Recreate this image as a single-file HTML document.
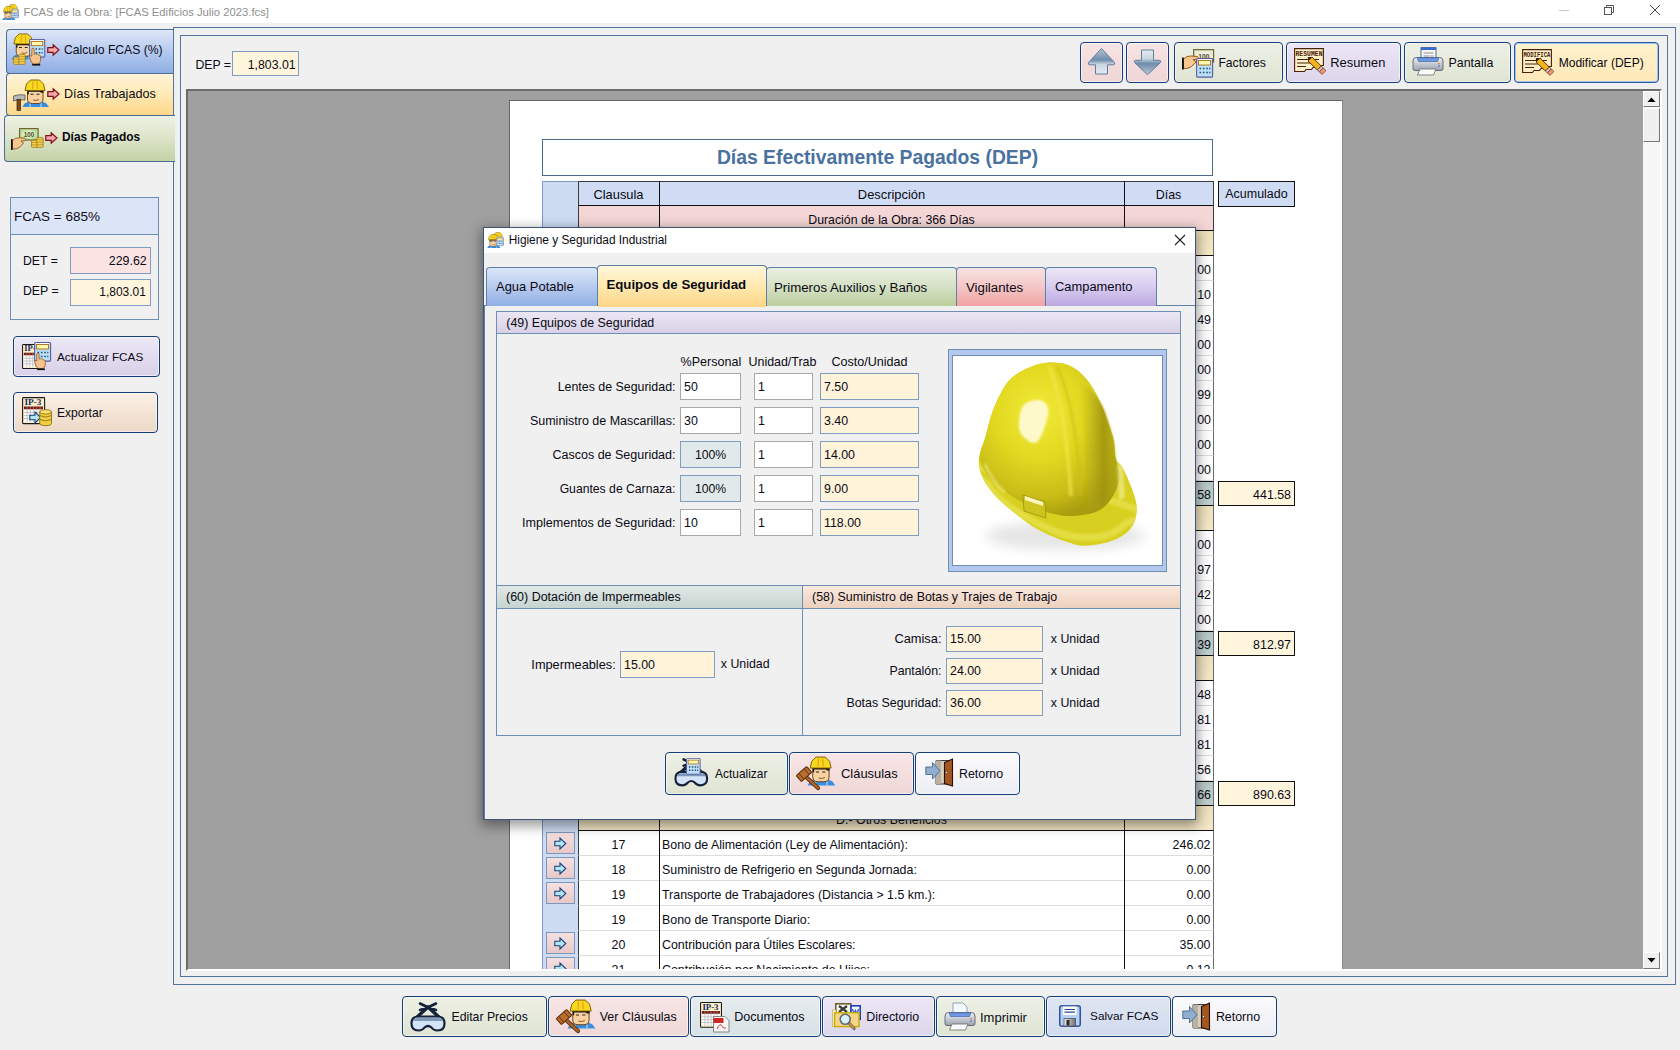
<!DOCTYPE html><html><head><meta charset="utf-8"><style>
*{box-sizing:border-box;margin:0;padding:0}
html,body{width:1680px;height:1050px;overflow:hidden;background:#f0f0f0;font-family:"Liberation Sans",sans-serif;font-size:12.5px;color:#0a0a14;position:relative}
.a{position:absolute}
.t{position:absolute;white-space:nowrap;line-height:1}
.btn{position:absolute;border:1px solid #143e7a;border-radius:4px;box-shadow:inset 0 0 0 1px rgba(255,255,255,.55)}
.fld{position:absolute;border:1px solid #7f9dc0;white-space:nowrap;line-height:1}
.wf{position:absolute;border:1px solid #a8a8a8;background:#fff;white-space:nowrap;line-height:1}
</style></head><body><div class="a" style="left:0px;top:0px;width:1680px;height:23px;background:#fff"></div><svg class="a" style="left:7px;top:4px;width:13px;height:14px;overflow:visible" viewBox="0 0 13 14"><g transform="scale(0.45)">
<path d="M0.5 28 L2.5 24.5 Q5 22.5 9 22 H18 Q22 22.5 24.5 24.5 L27 28Z" fill="#3a8ee0"/>
<path d="M8 22.5v5.5M19 22.5v5.5" stroke="#a8d0f8" stroke-width="1.2"/>
<path d="M5.5 11 H21 V20 Q21 24.5 16 24.5 H10.5 Q5.5 24.5 5.5 20Z" fill="#f8d2a0" stroke="#6a3a10" stroke-width="0.9"/>
<path d="M5.5 10.5 H21.5 V13.8 H19 L18 12.8 H6.8 V15.5 H5.5Z" fill="#151515"/>
<path d="M8.5 15.2h3M14.5 15.2h3" stroke="#222" stroke-width="1.1"/>
<path d="M11 21 Q14 22.2 17 20.5" stroke="#8a4a20" stroke-width="0.9" fill="none"/>
<path d="M3 11.5 L4.5 5 L8.5 1 H17.5 L21.5 5 L23 11.5Z" fill="#f6d820" stroke="#7a5800" stroke-width="0.9" stroke-linejoin="round"/>
<path d="M11 2.5 L10.5 10M15 2.5 L15.5 10" stroke="#e89a10" stroke-width="1"/>
</g></svg><svg class="a" style="left:2px;top:6px;width:15px;height:15px;overflow:visible" viewBox="0 0 15 15"><g transform="scale(0.5)">
<path d="M0.5 28 L2.5 24.5 Q5 22.5 9 22 H18 Q22 22.5 24.5 24.5 L27 28Z" fill="#3a8ee0"/>
<path d="M8 22.5v5.5M19 22.5v5.5" stroke="#a8d0f8" stroke-width="1.2"/>
<path d="M5.5 11 H21 V20 Q21 24.5 16 24.5 H10.5 Q5.5 24.5 5.5 20Z" fill="#f8d2a0" stroke="#6a3a10" stroke-width="0.9"/>
<path d="M5.5 10.5 H21.5 V13.8 H19 L18 12.8 H6.8 V15.5 H5.5Z" fill="#151515"/>
<path d="M8.5 15.2h3M14.5 15.2h3" stroke="#222" stroke-width="1.1"/>
<path d="M11 21 Q14 22.2 17 20.5" stroke="#8a4a20" stroke-width="0.9" fill="none"/>
<path d="M3 11.5 L4.5 5 L8.5 1 H17.5 L21.5 5 L23 11.5Z" fill="#f6d820" stroke="#7a5800" stroke-width="0.9" stroke-linejoin="round"/>
<path d="M11 2.5 L10.5 10M15 2.5 L15.5 10" stroke="#e89a10" stroke-width="1"/>
</g></svg><svg class="a" style="left:11px;top:9px;width:8px;height:10px;overflow:visible" viewBox="0 0 8 10"><g transform="scale(0.45)">
<rect x="0.6" y="0.6" width="16" height="18.5" rx="1" fill="#b8e0f8" stroke="#5a5aa0" stroke-width="1.1"/>
<path d="M1.5 1.5h14" stroke="#fff" stroke-width="1"/>
<rect x="2.5" y="2.5" width="12" height="4.5" fill="#fff8b0" stroke="#b06a10" stroke-width="0.9"/>
<path d="M3.5 10.5h1.6M6.9 10.5h1.6M10.3 10.5h1.6M13.2 10.5h1.2M3.5 14.5h1.6M6.9 14.5h1.6M10.3 14.5h1.6M13.2 14.5h1.2" stroke="#34466a" stroke-width="1.7"/>
</g></svg><div class="t" style="left:23.50px;top:6.51px;font-size:11.28px;color:#8f8f8f;">FCAS de la Obra: [FCAS Edificios Julio 2023.fcs]</div><div class="a" style="left:1559px;top:10px;width:10px;height:1px;background:#c8c8c8"></div><svg class="a" style="left:1600px;top:0;width:70px;height:20px" viewBox="0 0 70 20"><rect x="4.5" y="7.5" width="7" height="7" fill="none" stroke="#555" stroke-width="1"/><path d="M6.5 7.5V5.5H13.5V12.5H11.5" fill="none" stroke="#555" stroke-width="1"/><path d="M50 5L60 15M60 5L50 15" stroke="#444" stroke-width="1"/></svg><div class="a" style="left:173px;top:27px;width:1503px;height:958px;border:1px solid #52739c;"></div><div class="a" style="left:180px;top:35px;width:1488px;height:942px;border:1px solid #52739c;"></div><div class="a" style="left:186px;top:89px;width:1476px;height:882px;background:#a0a0a0;border-top:2px solid #6c6c6c;border-left:2px solid #6c6c6c;border-right:2px solid #fff;border-bottom:2px solid #fff"></div><div class="a" style="left:1643px;top:91px;width:17px;height:878px;background:#f7f7f7;"></div><div class="a" style="left:1643px;top:91px;width:17px;height:16px;background:#f0f0f0;border:1px solid #fff;border-right-color:#777;border-bottom-color:#777"></div><svg class="a" style="left:1643px;top:91px;width:17px;height:16px"><path d="M4.5 11L8.5 6.5L12.5 11Z" fill="#000"/></svg><div class="a" style="left:1643px;top:108px;width:17px;height:34px;background:#f0f0f0;border:1px solid #fff;border-right-color:#777;border-bottom-color:#777"></div><div class="a" style="left:1643px;top:952px;width:17px;height:17px;background:#f0f0f0;border:1px solid #fff;border-right-color:#777;border-bottom-color:#777"></div><svg class="a" style="left:1643px;top:952px;width:17px;height:17px"><path d="M4.5 6L8.5 10.5L12.5 6Z" fill="#000"/></svg><div class="t" style="left:195.40px;top:58.85px;font-size:12.29px;">DEP =</div><div class="a" style="left:232px;top:51px;width:67px;height:25px;background:#fff5dc;border:1px solid #7f9dc0"></div><div class="t" style="left:232.00px;top:59.05px;font-size:12.30px;width:63.6px;text-align:right;">1,803.01</div><div class="a" style="left:6px;top:29px;width:167px;height:45px;background:linear-gradient(to bottom,#dfe8f8,#b5c9ee 50%,#8eaee5);border:1px solid #4a6d96;border-right:none;border-radius:4px 0 0 4px;"></div><div class="a" style="left:6px;top:73px;width:167px;height:43px;background:linear-gradient(to bottom,#fff4d8,#ffe9b4 50%,#fdd78a);border:1px solid #4a6d96;border-right:none;border-radius:4px 0 0 4px;"></div><div class="a" style="left:4px;top:115px;width:171px;height:47px;background:linear-gradient(to bottom,#eef1e4,#dce4c8 50%,#c3d2a6);border:1px solid #4a6d96;border-right:none;border-radius:4px 0 0 4px;"></div><div class="a" style="left:172px;top:116px;width:3px;height:45px;background:linear-gradient(to bottom,#eef1e4,#dce4c8 50%,#c3d2a6);"></div><svg class="a" style="left:11px;top:33px;width:27px;height:28px;overflow:visible" viewBox="0 0 27 28"><g transform="scale(0.95)">
<path d="M0.5 28 L2.5 24.5 Q5 22.5 9 22 H18 Q22 22.5 24.5 24.5 L27 28Z" fill="#3a8ee0"/>
<path d="M8 22.5v5.5M19 22.5v5.5" stroke="#a8d0f8" stroke-width="1.2"/>
<path d="M5.5 11 H21 V20 Q21 24.5 16 24.5 H10.5 Q5.5 24.5 5.5 20Z" fill="#f8d2a0" stroke="#6a3a10" stroke-width="0.9"/>
<path d="M5.5 10.5 H21.5 V13.8 H19 L18 12.8 H6.8 V15.5 H5.5Z" fill="#151515"/>
<path d="M8.5 15.2h3M14.5 15.2h3" stroke="#222" stroke-width="1.1"/>
<path d="M11 21 Q14 22.2 17 20.5" stroke="#8a4a20" stroke-width="0.9" fill="none"/>
<path d="M3 11.5 L4.5 5 L8.5 1 H17.5 L21.5 5 L23 11.5Z" fill="#f6d820" stroke="#7a5800" stroke-width="0.9" stroke-linejoin="round"/>
<path d="M11 2.5 L10.5 10M15 2.5 L15.5 10" stroke="#e89a10" stroke-width="1"/>
</g></svg><svg class="a" style="left:13px;top:54px;width:13px;height:11px;overflow:visible" viewBox="0 0 13 11"><g transform="scale(0.9)">
<rect x="0.5" y="3.5" width="7" height="8" rx="1" fill="#f3d050" stroke="#9a7010" stroke-width="0.8"/>
<rect x="6.5" y="0.5" width="7" height="11" rx="1" fill="#f3d050" stroke="#9a7010" stroke-width="0.8"/>
<path d="M1 6h6.5M1 8.8h6.5M7 3h6.5M7 5.8h6.5M7 8.6h6.5" stroke="#b08820" stroke-width="0.8"/>
</g></svg><svg class="a" style="left:29px;top:39px;width:17px;height:20px;overflow:visible" viewBox="0 0 17 20"><g transform="scale(0.95)">
<rect x="0.6" y="0.6" width="16" height="18.5" rx="1" fill="#b8e0f8" stroke="#5a5aa0" stroke-width="1.1"/>
<path d="M1.5 1.5h14" stroke="#fff" stroke-width="1"/>
<rect x="2.5" y="2.5" width="12" height="4.5" fill="#fff8b0" stroke="#b06a10" stroke-width="0.9"/>
<path d="M3.5 10.5h1.6M6.9 10.5h1.6M10.3 10.5h1.6M13.2 10.5h1.2M3.5 14.5h1.6M6.9 14.5h1.6M10.3 14.5h1.6M13.2 14.5h1.2" stroke="#34466a" stroke-width="1.7"/>
</g></svg><svg class="a" style="left:29px;top:47px;width:13px;height:20px;overflow:visible" viewBox="0 0 13 20"><g transform="scale(0.8)">
<path d="M4 1.5 Q6 0.5 6.5 3 V9 Q8 8 9.5 9 Q11 8.5 12 10 Q14 9.8 14.5 11.5 V17 Q14 21 10 21.5 H6 Q2.5 20 1.5 15 L0.8 11.5 Q1.5 10 3.5 11.5 V3Z" fill="#f6c38c" stroke="#8a4a10" stroke-width="0.9"/>
<rect x="4" y="21" width="10" height="2.2" fill="#111"/>
</g></svg><svg class="a" style="left:47px;top:44px;width:13px;height:12px;overflow:visible" viewBox="0 0 13 12"><path d="M0.8 3.6H6.2V0.8L12 6L6.2 11.2V8.4H0.8Z" fill="#f4a6aa" stroke="#7a1018" stroke-width="1.2" stroke-linejoin="miter"/></svg><div class="t" style="left:64.00px;top:44.37px;font-size:12.17px;">Calculo FCAS (%)</div><svg class="a" style="left:13px;top:94px;width:14px;height:18px;overflow:visible" viewBox="0 0 14 18"><g transform="scale(1.0)">
<path d="M0.5 2 Q5 0 12 1 V6 Q5 5 0.5 7Z" fill="#b8b8b8" stroke="#555" stroke-width="0.8"/>
<rect x="4" y="5.5" width="3.5" height="11" fill="#7a4a18" stroke="#3a2008" stroke-width="0.7"/>
</g></svg><svg class="a" style="left:22px;top:79px;width:29px;height:30px;overflow:visible" viewBox="0 0 29 30"><g transform="scale(1.0)">
<path d="M0.5 28 L2.5 24.5 Q5 22.5 9 22 H18 Q22 22.5 24.5 24.5 L27 28Z" fill="#3a8ee0"/>
<path d="M8 22.5v5.5M19 22.5v5.5" stroke="#a8d0f8" stroke-width="1.2"/>
<path d="M5.5 11 H21 V20 Q21 24.5 16 24.5 H10.5 Q5.5 24.5 5.5 20Z" fill="#f8d2a0" stroke="#6a3a10" stroke-width="0.9"/>
<path d="M5.5 10.5 H21.5 V13.8 H19 L18 12.8 H6.8 V15.5 H5.5Z" fill="#151515"/>
<path d="M8.5 15.2h3M14.5 15.2h3" stroke="#222" stroke-width="1.1"/>
<path d="M11 21 Q14 22.2 17 20.5" stroke="#8a4a20" stroke-width="0.9" fill="none"/>
<path d="M3 11.5 L4.5 5 L8.5 1 H17.5 L21.5 5 L23 11.5Z" fill="#f6d820" stroke="#7a5800" stroke-width="0.9" stroke-linejoin="round"/>
<path d="M11 2.5 L10.5 10M15 2.5 L15.5 10" stroke="#e89a10" stroke-width="1"/>
</g></svg><svg class="a" style="left:47px;top:88px;width:13px;height:12px;overflow:visible" viewBox="0 0 13 12"><path d="M0.8 3.6H6.2V0.8L12 6L6.2 11.2V8.4H0.8Z" fill="#f4a6aa" stroke="#7a1018" stroke-width="1.2" stroke-linejoin="miter"/></svg><div class="t" style="left:64.00px;top:88.10px;font-size:12.60px;">Días Trabajados</div><svg class="a" style="left:19px;top:128px;width:21px;height:14px;overflow:visible" viewBox="0 0 21 14"><g transform="scale(0.88)">
<rect x="0.7" y="0.7" width="21" height="13" fill="#b8dca0" stroke="#6a5a20" stroke-width="1.2"/>
<ellipse cx="11" cy="7" rx="8" ry="4.6" fill="#d4eec0"/>
<text x="11.5" y="10.6" font-family="Liberation Sans" font-size="8.4" text-anchor="middle" fill="#5a4a18" font-weight="bold" textLength="12" lengthAdjust="spacingAndGlyphs">100</text>
</g></svg><svg class="a" style="left:11px;top:136px;width:17px;height:15px;overflow:visible" viewBox="0 0 17 15"><g transform="scale(0.9)">
<path d="M1.5 5 Q5 1.5 9 2 L15.5 2.5 Q17 3.8 15.5 5.2 L11 5.6 L13.5 7.2 Q14.5 8.8 12.5 9.4 L9.5 12.5 Q6 15 1.5 14.5 Z" fill="#f8c890" stroke="#8a4a10" stroke-width="0.9"/>
<rect x="0" y="3.5" width="1.8" height="12" fill="#111"/>
</g></svg><svg class="a" style="left:31px;top:137px;width:13px;height:11px;overflow:visible" viewBox="0 0 13 11"><g transform="scale(0.9)">
<rect x="0.5" y="3.5" width="7" height="8" rx="1" fill="#f3d050" stroke="#9a7010" stroke-width="0.8"/>
<rect x="6.5" y="0.5" width="7" height="11" rx="1" fill="#f3d050" stroke="#9a7010" stroke-width="0.8"/>
<path d="M1 6h6.5M1 8.8h6.5M7 3h6.5M7 5.8h6.5M7 8.6h6.5" stroke="#b08820" stroke-width="0.8"/>
</g></svg><svg class="a" style="left:45px;top:132px;width:13px;height:12px;overflow:visible" viewBox="0 0 13 12"><path d="M0.8 3.6H6.2V0.8L12 6L6.2 11.2V8.4H0.8Z" fill="#f4a6aa" stroke="#7a1018" stroke-width="1.2" stroke-linejoin="miter"/></svg><div class="t" style="left:62.00px;top:132.41px;font-size:11.93px;font-weight:bold;">Días Pagados</div><div class="a" style="left:10px;top:197px;width:149px;height:123px;border:1px solid #6d8fb6;"></div><div class="a" style="left:11px;top:198px;width:147px;height:37px;background:#dce5f7;border-bottom:1px solid #6d8fb6;"></div><div class="t" style="left:14.00px;top:209.66px;font-size:13.50px;">FCAS = 685%</div><div class="t" style="left:23.00px;top:254.86px;font-size:12.24px;">DET =</div><div class="a" style="left:70px;top:247px;width:81px;height:27px;background:#fbe3e3;border:1px solid #7f9dc0"></div><div class="t" style="left:70.00px;top:255.13px;font-size:12.41px;width:76.7px;text-align:right;">229.62</div><div class="t" style="left:23.00px;top:284.85px;font-size:12.29px;">DEP =</div><div class="a" style="left:70px;top:279px;width:81px;height:27px;background:#fff5dc;border:1px solid #7f9dc0"></div><div class="t" style="left:70.00px;top:286.91px;font-size:11.95px;width:75.8px;text-align:right;">1,803.01</div><div class="btn" style="left:13px;top:336px;width:147px;height:41px;background:linear-gradient(to bottom,#ece8f6,#e2dcef 50%,#d9d1e8);"></div><svg class="a" style="left:22px;top:344px;width:22px;height:25px;overflow:visible" viewBox="0 0 22 25"><g transform="scale(0.92)">
<rect x="0.6" y="0.6" width="22" height="26" rx="0.8" fill="#fbeec4" stroke="#1a1a1a" stroke-width="1.1"/>
<text x="2.5" y="8" font-family="Liberation Serif" font-size="8.6" font-weight="bold" fill="#1a2a6a" textLength="17" lengthAdjust="spacingAndGlyphs">IP-3</text>
<rect x="2" y="9.5" width="19" height="3" fill="#7a1a10"/>
<rect x="2" y="12.5" width="19" height="12.5" fill="#fafafa"/>
<path d="M2 15.5h19M2 18.5h19M2 21.5h19M5.2 9.5v15.5M8.4 9.5v15.5M11.6 9.5v15.5M14.8 9.5v15.5M18 9.5v15.5" stroke="#a8a8a8" stroke-width="0.6"/>
</g></svg><svg class="a" style="left:34px;top:342px;width:18px;height:21px;overflow:visible" viewBox="0 0 18 21"><g transform="scale(1.0)">
<rect x="0.6" y="0.6" width="16" height="18.5" rx="1" fill="#b8e0f8" stroke="#5a5aa0" stroke-width="1.1"/>
<path d="M1.5 1.5h14" stroke="#fff" stroke-width="1"/>
<rect x="2.5" y="2.5" width="12" height="4.5" fill="#fff8b0" stroke="#b06a10" stroke-width="0.9"/>
<path d="M3.5 10.5h1.6M6.9 10.5h1.6M10.3 10.5h1.6M13.2 10.5h1.2M3.5 14.5h1.6M6.9 14.5h1.6M10.3 14.5h1.6M13.2 14.5h1.2" stroke="#34466a" stroke-width="1.7"/>
</g></svg><svg class="a" style="left:34px;top:352px;width:13px;height:19px;overflow:visible" viewBox="0 0 13 19"><g transform="scale(0.78)">
<path d="M4 1.5 Q6 0.5 6.5 3 V9 Q8 8 9.5 9 Q11 8.5 12 10 Q14 9.8 14.5 11.5 V17 Q14 21 10 21.5 H6 Q2.5 20 1.5 15 L0.8 11.5 Q1.5 10 3.5 11.5 V3Z" fill="#f6c38c" stroke="#8a4a10" stroke-width="0.9"/>
<rect x="4" y="21" width="10" height="2.2" fill="#111"/>
</g></svg><div class="t" style="left:57.00px;top:351.34px;font-size:11.77px;">Actualizar FCAS</div><div class="btn" style="left:13px;top:392px;width:145px;height:41px;background:linear-gradient(to bottom,#fbf0e6,#f4e4d6 50%,#edd8c6);"></div><svg class="a" style="left:22px;top:397px;width:24px;height:28px;overflow:visible" viewBox="0 0 24 28"><g transform="scale(1.0)">
<rect x="0.6" y="0.6" width="22" height="26" rx="0.8" fill="#fbeec4" stroke="#1a1a1a" stroke-width="1.1"/>
<text x="2.5" y="8" font-family="Liberation Serif" font-size="8.6" font-weight="bold" fill="#1a2a6a" textLength="17" lengthAdjust="spacingAndGlyphs">IP-3</text>
<rect x="2" y="9.5" width="19" height="3" fill="#7a1a10"/>
<rect x="2" y="12.5" width="19" height="12.5" fill="#fafafa"/>
<path d="M2 15.5h19M2 18.5h19M2 21.5h19M5.2 9.5v15.5M8.4 9.5v15.5M11.6 9.5v15.5M14.8 9.5v15.5M18 9.5v15.5" stroke="#a8a8a8" stroke-width="0.6"/>
</g></svg><svg class="a" style="left:29px;top:411px;width:14px;height:14px;overflow:visible" viewBox="0 0 14 14"><g transform="scale(1.0)">
<path d="M0.8 4.2 H6 V1 L11.8 6.5 L6 12 V8.8 H0.8Z" fill="#b4e6fa" stroke="#17407a" stroke-width="1.1"/>
</g></svg><svg class="a" style="left:39px;top:409px;width:14px;height:18px;overflow:visible" viewBox="0 0 14 18"><g transform="scale(0.95)">
<path d="M0.8 3 V15 Q0.8 17.5 7 17.5 Q13.2 17.5 13.2 15 V3" fill="#f0d040" stroke="#8a6a10" stroke-width="0.9"/>
<ellipse cx="7" cy="3" rx="6.2" ry="2.3" fill="#f8e070" stroke="#8a6a10" stroke-width="0.9"/>
<path d="M0.8 7 Q7 10 13.2 7M0.8 11 Q7 14 13.2 11" stroke="#8a6a10" stroke-width="0.9" fill="none"/>
</g></svg><div class="t" style="left:57.00px;top:406.88px;font-size:12.10px;">Exportar</div><div class="btn" style="left:1080px;top:42px;width:43px;height:41px;background:linear-gradient(to bottom,#f8e4e4,#f4dcdc 50%,#f0d6d6);"></div><svg class="a" style="left:1086px;top:47px;width:31px;height:29px;overflow:visible" viewBox="0 0 31 29"><defs><linearGradient id="gu" x1="0" y1="0" x2="0" y2="1"><stop offset="0" stop-color="#b8c8d8"/><stop offset=".45" stop-color="#6f8cab"/><stop offset=".62" stop-color="#c9d6e2"/><stop offset="1" stop-color="#e4ebf0"/></linearGradient></defs><path d="M15.5 1.5 L28.5 15.5 Q29.5 17.8 27.3 17.8 H21.5 V27 H9.5 V17.8 H3.7 Q1.5 17.8 2.5 15.5 Z" fill="url(#gu)" stroke="#5f7d9d" stroke-width="1"/></svg><div class="btn" style="left:1126px;top:42px;width:43px;height:41px;background:linear-gradient(to bottom,#f8e4e4,#f4dcdc 50%,#f0d6d6);"></div><svg class="a" style="left:1132px;top:47px;width:31px;height:29px;overflow:visible" viewBox="0 0 31 29"><defs><linearGradient id="gd" x1="0" y1="0" x2="0" y2="1"><stop offset="0" stop-color="#e4ebf0"/><stop offset=".35" stop-color="#c9d6e2"/><stop offset=".55" stop-color="#6f8cab"/><stop offset="1" stop-color="#b8c8d8"/></linearGradient></defs><path d="M15.5 27.7 L28.5 15.5 Q29.5 13.3 27.3 13.3 H21.5 V3 H9.5 V13.3 H3.7 Q1.5 13.3 2.5 15.5 Z" fill="url(#gd)" stroke="#5f7d9d" stroke-width="1"/></svg><div class="btn" style="left:1174px;top:42px;width:109px;height:41px;background:linear-gradient(to bottom,#eef0e6,#e6eadc 50%,#dfe4d2);"></div><svg class="a" style="left:1193px;top:49px;width:22px;height:15px;overflow:visible" viewBox="0 0 22 15"><g transform="scale(0.95)">
<rect x="0.7" y="0.7" width="21" height="13" fill="#e4ead4" stroke="#6a5a20" stroke-width="1.2"/>
<ellipse cx="11" cy="7" rx="8" ry="4.6" fill="#eef2e2"/>
<text x="11.5" y="10.6" font-family="Liberation Sans" font-size="8.4" text-anchor="middle" fill="#5a4a18" font-weight="bold" textLength="12" lengthAdjust="spacingAndGlyphs">100</text>
</g></svg><svg class="a" style="left:1182px;top:54px;width:19px;height:17px;overflow:visible" viewBox="0 0 19 17"><g transform="scale(1.0)">
<path d="M1.5 5 Q5 1.5 9 2 L15.5 2.5 Q17 3.8 15.5 5.2 L11 5.6 L13.5 7.2 Q14.5 8.8 12.5 9.4 L9.5 12.5 Q6 15 1.5 14.5 Z" fill="#f8c890" stroke="#8a4a10" stroke-width="0.9"/>
<rect x="0" y="3.5" width="1.8" height="12" fill="#111"/>
</g></svg><svg class="a" style="left:1196px;top:58px;width:18px;height:21px;overflow:visible" viewBox="0 0 18 21"><g transform="scale(1.0)">
<rect x="0.6" y="0.6" width="16" height="18.5" rx="1" fill="#b8e0f8" stroke="#5a5aa0" stroke-width="1.1"/>
<path d="M1.5 1.5h14" stroke="#fff" stroke-width="1"/>
<rect x="2.5" y="2.5" width="12" height="4.5" fill="#fff8b0" stroke="#b06a10" stroke-width="0.9"/>
<path d="M3.5 10.5h1.6M6.9 10.5h1.6M10.3 10.5h1.6M13.2 10.5h1.2M3.5 14.5h1.6M6.9 14.5h1.6M10.3 14.5h1.6M13.2 14.5h1.2" stroke="#34466a" stroke-width="1.7"/>
</g></svg><div class="t" style="left:1218.40px;top:57.17px;font-size:12.19px;">Factores</div><div class="btn" style="left:1286px;top:42px;width:115px;height:41px;background:linear-gradient(to bottom,#ece6f6,#e4def0 50%,#ddd6ea);"></div><svg class="a" style="left:1294px;top:48px;width:35px;height:29px;overflow:visible" viewBox="0 0 35 29"><g transform="scale(1.0)">
<path d="M0.6 0.6 H29.4 V17.5 L25 17.5 L23.5 19.5 L19 19.5 L17.5 21.5 L12 21.5 L10.5 23.5 L0.6 23.5Z" fill="#fdf0c8" stroke="#4a2008" stroke-width="1.1"/>
<text x="15" y="7.8" font-family="Liberation Mono" font-size="7" font-weight="bold" text-anchor="middle" fill="#4a2008" textLength="27" lengthAdjust="spacingAndGlyphs">RESUMEN</text>
<path d="M3 11.5h22M3 15h14M3 18.5h9" stroke="#4a2008" stroke-width="1.1"/>
<g transform="translate(16 11) rotate(44)">
<rect x="0" y="-2.8" width="13" height="5.6" fill="#f2b41e" stroke="#5a3008" stroke-width="0.9"/>
<path d="M0 -2.8 L-3 0 L0 2.8Z" fill="#3a2008"/>
<rect x="13" y="-2.8" width="2.8" height="5.6" fill="#c8c8c8" stroke="#5a3008" stroke-width="0.7"/>
<rect x="15.8" y="-2.8" width="3.6" height="5.6" rx="1" fill="#f29a80" stroke="#8a3a10" stroke-width="0.8"/>
</g>
</g></svg><div class="t" style="left:1330.30px;top:57.36px;font-size:12.87px;">Resumen</div><div class="btn" style="left:1404px;top:42px;width:107px;height:41px;background:linear-gradient(to bottom,#eef0e6,#e6eadc 50%,#dfe4d2);"></div><svg class="a" style="left:1412px;top:47px;width:33px;height:30px;overflow:visible" viewBox="0 0 33 30"><g transform="scale(1.0)">
<defs><linearGradient id="pg1412" x1="0" y1="0" x2="0" y2="1"><stop offset="0" stop-color="#f0f2f6"/><stop offset="1" stop-color="#9aa2ae"/></linearGradient></defs>
<rect x="9" y="0.6" width="15" height="12" fill="#f8f8f8" stroke="#4a5a7a" stroke-width="0.9"/><rect x="9" y="0.6" width="15" height="2.4" fill="#3a6ad8"/><path d="M11.5 6h10M11.5 9h6M18.5 9h3" stroke="#8a8a9a" stroke-width="1"/>
<path d="M1 14 Q1 10.5 4.5 10.5 H27.5 Q31 10.5 31 14 V21.5 Q31 23.5 29 23.5 H3 Q1 23.5 1 21.5Z" fill="url(#pg1412)" stroke="#5a6272" stroke-width="0.9"/>
<path d="M5 10.8 H27 L25.5 14.5 H6.5Z" fill="#6f98e4" stroke="#3a5aa0" stroke-width="0.6"/>
<path d="M8 22 H24 L21.5 28 H5.5Z" fill="#fafafa" stroke="#6a6a6a" stroke-width="0.8"/>
<rect x="26" y="16" width="2" height="1.2" fill="#f08040"/><rect x="26" y="18.5" width="2" height="1.2" fill="#6a6ad0"/>
</g></svg><div class="t" style="left:1448.60px;top:57.44px;font-size:12.38px;">Pantalla</div><div class="btn" style="left:1514px;top:42px;width:145px;height:41px;background:linear-gradient(to bottom,#fff2cc,#ffedc2 50%,#fde8b8);border-color:#2a5aa0;box-shadow:inset 0 0 0 1px #9ec0f0;"></div><svg class="a" style="left:1522px;top:49px;width:35px;height:29px;overflow:visible" viewBox="0 0 35 29"><g transform="scale(1.0)">
<path d="M0.6 0.6 H29.4 V17.5 L25 17.5 L23.5 19.5 L19 19.5 L17.5 21.5 L12 21.5 L10.5 23.5 L0.6 23.5Z" fill="#fdf0c8" stroke="#4a2008" stroke-width="1.1"/>
<text x="15" y="7.8" font-family="Liberation Mono" font-size="7" font-weight="bold" text-anchor="middle" fill="#4a2008" textLength="27" lengthAdjust="spacingAndGlyphs">MODIFICA</text>
<path d="M3 11.5h22M3 15h14M3 18.5h9" stroke="#4a2008" stroke-width="1.1"/>
<g transform="translate(16 11) rotate(44)">
<rect x="0" y="-2.8" width="13" height="5.6" fill="#f2b41e" stroke="#5a3008" stroke-width="0.9"/>
<path d="M0 -2.8 L-3 0 L0 2.8Z" fill="#3a2008"/>
<rect x="13" y="-2.8" width="2.8" height="5.6" fill="#c8c8c8" stroke="#5a3008" stroke-width="0.7"/>
<rect x="15.8" y="-2.8" width="3.6" height="5.6" rx="1" fill="#f29a80" stroke="#8a3a10" stroke-width="0.8"/>
</g>
</g></svg><div class="t" style="left:1558.70px;top:57.19px;font-size:12.06px;">Modificar (DEP)</div><div class="btn" style="left:402px;top:996px;width:145px;height:41px;background:linear-gradient(to bottom,#eef0e4,#e6eadc 50%,#dfe4d2);"></div><svg class="a" style="left:410px;top:1001px;width:37px;height:32px;overflow:visible" viewBox="0 0 37 32"><g transform="scale(1.0)">
<path d="M18 6 L5 18 M18 6 L31 18" stroke="#16223a" stroke-width="3.4" stroke-linecap="round"/>
<path d="M10 2.5 Q18 7 26 9 M10 9 Q18 7 26 2.5" stroke="#16223a" stroke-width="2.6" fill="none" stroke-linecap="round"/>
<path d="M1.5 22.5 Q1.5 15.5 8.5 15.5 H27.5 Q34.5 15.5 34.5 22.5 Q34.5 29.5 27.5 29.5 Q23.5 29.5 21.5 26.5 Q18 23.5 14.5 26.5 Q12.5 29.5 8.5 29.5 Q1.5 29.5 1.5 22.5Z" fill="#d4e4f8" stroke="#16223a" stroke-width="2.2"/>
<path d="M3 20 Q4 17 8.5 17 H27.5 Q32 17 33 20 Z" fill="#7f98b8"/>
</g></svg><div class="t" style="left:451.50px;top:1011.36px;font-size:12.26px;">Editar Precios</div><div class="btn" style="left:548px;top:996px;width:141px;height:41px;background:linear-gradient(to bottom,#f8e6e6,#f4dede 50%,#f0d8d8);"></div><svg class="a" style="left:567px;top:999px;width:30px;height:31px;overflow:visible" viewBox="0 0 30 31"><g transform="scale(1.05)">
<path d="M0.5 28 L2.5 24.5 Q5 22.5 9 22 H18 Q22 22.5 24.5 24.5 L27 28Z" fill="#3a8ee0"/>
<path d="M8 22.5v5.5M19 22.5v5.5" stroke="#a8d0f8" stroke-width="1.2"/>
<path d="M5.5 11 H21 V20 Q21 24.5 16 24.5 H10.5 Q5.5 24.5 5.5 20Z" fill="#f8d2a0" stroke="#6a3a10" stroke-width="0.9"/>
<path d="M5.5 10.5 H21.5 V13.8 H19 L18 12.8 H6.8 V15.5 H5.5Z" fill="#151515"/>
<path d="M8.5 15.2h3M14.5 15.2h3" stroke="#222" stroke-width="1.1"/>
<path d="M11 21 Q14 22.2 17 20.5" stroke="#8a4a20" stroke-width="0.9" fill="none"/>
<path d="M3 11.5 L4.5 5 L8.5 1 H17.5 L21.5 5 L23 11.5Z" fill="#f6d820" stroke="#7a5800" stroke-width="0.9" stroke-linejoin="round"/>
<path d="M11 2.5 L10.5 10M15 2.5 L15.5 10" stroke="#e89a10" stroke-width="1"/>
</g></svg><svg class="a" style="left:556px;top:1008px;width:25px;height:26px;overflow:visible" viewBox="0 0 25 26"><g transform="scale(1.0)">
<path d="M9 11 L22 23" stroke="#5a2a08" stroke-width="4.2" stroke-linecap="round"/>
<path d="M9 11 L22 23" stroke="#a8642a" stroke-width="2.4" stroke-linecap="round"/>
<g transform="rotate(-42 8 9)"><rect x="1" y="5" width="14" height="8" rx="1" fill="#b86e30" stroke="#5a2a08" stroke-width="1"/><path d="M4.5 5v8M11.5 5v8" stroke="#7a4010" stroke-width="1"/></g>
</g></svg><div class="t" style="left:599.70px;top:1011.32px;font-size:12.50px;">Ver Cláusulas</div><div class="btn" style="left:690px;top:996px;width:131px;height:41px;background:linear-gradient(to bottom,#e6ecee,#dfe6ea 50%,#d8e2e6);"></div><svg class="a" style="left:700px;top:1002px;width:22px;height:26px;overflow:visible" viewBox="0 0 22 26"><g transform="scale(0.95)">
<rect x="0.6" y="0.6" width="22" height="26" rx="0.8" fill="#fbeec4" stroke="#1a1a1a" stroke-width="1.1"/>
<text x="2.5" y="8" font-family="Liberation Serif" font-size="8.6" font-weight="bold" fill="#1a2a6a" textLength="17" lengthAdjust="spacingAndGlyphs">IP-3</text>
<rect x="2" y="9.5" width="19" height="3" fill="#7a1a10"/>
<rect x="2" y="12.5" width="19" height="12.5" fill="#fafafa"/>
<path d="M2 15.5h19M2 18.5h19M2 21.5h19M5.2 9.5v15.5M8.4 9.5v15.5M11.6 9.5v15.5M14.8 9.5v15.5M18 9.5v15.5" stroke="#a8a8a8" stroke-width="0.6"/>
</g></svg><svg class="a" style="left:713px;top:1016px;width:18px;height:18px;overflow:visible" viewBox="0 0 18 18"><g transform="scale(1.0)">
<path d="M0.5 0.5 H12 L16 4.5 V16 H0.5Z" fill="#f6f6f6" stroke="#777" stroke-width="0.9"/>
<rect x="0.5" y="2" width="10" height="5" fill="#d02828"/>
<path d="M4 13 Q7 6 9 10 Q10 13 13 12" stroke="#d04040" stroke-width="1" fill="none"/>
</g></svg><div class="t" style="left:734.20px;top:1011.31px;font-size:12.55px;">Documentos</div><div class="btn" style="left:822px;top:996px;width:113px;height:41px;background:linear-gradient(to bottom,#ece6f6,#e4def0 50%,#ddd6ea);"></div><svg class="a" style="left:830px;top:1002px;width:32px;height:29px;overflow:visible" viewBox="0 0 32 29"><g transform="scale(1.0)">
<rect x="5.8" y="1.8" width="15" height="10" fill="#f8fbf0" stroke="#6a6030" stroke-width="1.6"/>
<path d="M9 4 L17 10 M17 4 L9 10" stroke="#3a3a3a" stroke-width="2.2"/>
<rect x="21" y="3.8" width="9.2" height="13.5" fill="#f4f8ff" stroke="#1a40c0" stroke-width="1.6"/>
<path d="M22.5 7 L24 12 L25.5 8.5 L27 12 L28.5 7" stroke="#2a50d0" stroke-width="1.2" fill="none"/>
<path d="M2.5 8 H6 V24.5 H2.5Z" fill="#fff6c8" stroke="#c8b070" stroke-width="0.8"/>
<rect x="4.5" y="10.8" width="24.5" height="13.8" fill="#f8d486" stroke="#c4b000" stroke-width="1.4"/>
<path d="M19 21 L24 26.5" stroke="#686868" stroke-width="3.2" stroke-linecap="round"/>
<path d="M19.5 21.5 L23.5 26" stroke="#e8923a" stroke-width="1.6" stroke-linecap="round"/>
<circle cx="15.2" cy="17.3" r="5" fill="#dcf2ff" stroke="#5a6a7a" stroke-width="1.6"/>
</g></svg><div class="t" style="left:866.20px;top:1011.34px;font-size:12.40px;">Directorio</div><div class="btn" style="left:936px;top:996px;width:109px;height:41px;background:linear-gradient(to bottom,#eef0e6,#e6eadc 50%,#dfe4d2);"></div><svg class="a" style="left:944px;top:1002px;width:33px;height:30px;overflow:visible" viewBox="0 0 33 30"><g transform="scale(1.0)">
<defs><linearGradient id="pg944" x1="0" y1="0" x2="0" y2="1"><stop offset="0" stop-color="#f0f2f6"/><stop offset="1" stop-color="#9aa2ae"/></linearGradient></defs>
<path d="M9 1 H19 L23 5 V12 H9Z" fill="#f4f8ff" stroke="#8a98b0" stroke-width="0.9"/>
<path d="M1 14 Q1 10.5 4.5 10.5 H27.5 Q31 10.5 31 14 V21.5 Q31 23.5 29 23.5 H3 Q1 23.5 1 21.5Z" fill="url(#pg944)" stroke="#5a6272" stroke-width="0.9"/>
<path d="M5 10.8 H27 L25.5 14.5 H6.5Z" fill="#6f98e4" stroke="#3a5aa0" stroke-width="0.6"/>
<path d="M8 22 H24 L21.5 28 H5.5Z" fill="#fafafa" stroke="#6a6a6a" stroke-width="0.8"/>
<rect x="26" y="16" width="2" height="1.2" fill="#f08040"/><rect x="26" y="18.5" width="2" height="1.2" fill="#6a6ad0"/>
</g></svg><div class="t" style="left:980.00px;top:1011.24px;font-size:13.01px;">Imprimir</div><div class="btn" style="left:1046px;top:996px;width:125px;height:41px;background:linear-gradient(to bottom,#dfe6f2,#d8e0f0 50%,#d0dbee);"></div><svg class="a" style="left:1059px;top:1005px;width:23px;height:23px;overflow:visible" viewBox="0 0 23 23"><g transform="scale(1.0)">
<defs><linearGradient id="fsh" x1="0" y1="0" x2="1" y2="0"><stop offset="0" stop-color="#f0f0f0"/><stop offset="1" stop-color="#707070"/></linearGradient></defs>
<rect x="0.8" y="0.8" width="20.4" height="20.4" rx="1.5" fill="#b4d0f8" stroke="#1a3a8a" stroke-width="1.3"/>
<rect x="4" y="1.5" width="13.5" height="8.5" fill="#fffdf0"/>
<path d="M5.5 4.5h10.5M5.5 7.2h10.5" stroke="#2a4aa0" stroke-width="1.2"/>
<rect x="5" y="13.5" width="11.5" height="7.5" fill="url(#fsh)" stroke="#444" stroke-width="0.7"/>
<rect x="7.5" y="15" width="3" height="5.5" fill="#2a2a2a"/>
</g></svg><div class="t" style="left:1090.00px;top:1011.42px;font-size:11.84px;">Salvar FCAS</div><div class="btn" style="left:1172px;top:996px;width:105px;height:41px;background:linear-gradient(to bottom,#fbfbfd,#f4f4f8 50%,#eceef4);"></div><svg class="a" style="left:1182px;top:1002px;width:30px;height:30px;overflow:visible" viewBox="0 0 30 30"><g transform="scale(1.0)">
<path d="M11 2.5 H27 V26 H11Z" fill="#d6cdbd" stroke="#2a2a2a" stroke-width="0.9"/>
<path d="M11 2.5 H16 V26 H11Z" fill="#b8b0a0"/>
<path d="M19.5 4.5 L27.5 1 V28 L19.5 25.5 Z" fill="#a4561e" stroke="#241006" stroke-width="1.1"/>
<circle cx="21.5" cy="14.5" r="1.1" fill="#f4f0e0" stroke="#222" stroke-width="0.5"/>
<path d="M0.8 9 H7.5 V4.5 L15 12.8 L7.5 21 V16.5 H0.8Z" fill="#90aed0" stroke="#456a90" stroke-width="0.9"/>
</g></svg><div class="t" style="left:1215.90px;top:1011.33px;font-size:12.41px;">Retorno</div><div class="a" style="left:0;top:0;width:1680px;height:1050px;clip-path:inset(91px 37px 81px 188px)"><div class="a" style="left:509px;top:100px;width:834px;height:869px;background:#fff;border-left:1px solid #666;border-top:1px solid #666;border-right:1px solid #888;"></div><div class="a" style="left:542px;top:139px;width:671px;height:37px;border:1px solid #4d6b8c;background:#fff"></div><div class="t" style="left:542.00px;top:147.74px;font-size:19.33px;font-weight:bold;color:#4a72a0;width:671px;text-align:center;">Días Efectivamente Pagados (DEP)</div><div class="a" style="left:542px;top:181px;width:37px;height:788px;background:#cddcf3;border-left:1px solid #7a98c0;border-top:1px solid #7a98c0;border-right:1px solid #7a98c0"></div><div class="a" style="left:578px;top:181px;width:636px;height:26px;background:#cfdcf3;border:1px solid #3a3a3a;border-bottom:2px solid #111"></div><div class="a" style="left:659px;top:181px;width:1px;height:26px;background:#111"></div><div class="a" style="left:1124px;top:181px;width:1px;height:26px;background:#111"></div><div class="t" style="left:578.00px;top:189.06px;font-size:12.87px;width:81px;text-align:center;">Clausula</div><div class="t" style="left:659.00px;top:189.06px;font-size:12.90px;width:465px;text-align:center;">Descripción</div><div class="t" style="left:1124.00px;top:189.12px;font-size:12.46px;width:89px;text-align:center;">Días</div><div class="a" style="left:1218px;top:181px;width:77px;height:26px;background:#cfdcf3;border:1px solid #111"></div><div class="t" style="left:1218.00px;top:188.32px;font-size:12.48px;width:77px;text-align:center;">Acumulado</div><div class="a" style="left:578px;top:206px;width:636px;height:25px;background:#f5d6d6;border-left:1px solid #3a3a3a;border-right:1px solid #3a3a3a;border-bottom:1px solid #111"></div><div class="a" style="left:659px;top:206px;width:1px;height:25px;background:#111"></div><div class="a" style="left:1124px;top:206px;width:1px;height:25px;background:#111"></div><div class="t" style="left:659.00px;top:213.84px;font-size:12.34px;width:465px;text-align:center;">Duración de la Obra: 366 Días</div><div class="a" style="left:578px;top:231px;width:636px;height:25px;background:linear-gradient(to bottom,#efe0bc,#f5e8c8);border-left:1px solid #3a3a3a;border-right:1px solid #6a6a6a;border-bottom:1px solid #111"></div><div class="a" style="left:659px;top:231px;width:1px;height:25px;background:#111"></div><div class="a" style="left:1124px;top:231px;width:1px;height:25px;background:#111"></div><div class="a" style="left:578px;top:256px;width:636px;height:25px;background:#fff;border-left:1px solid #3a3a3a;border-right:1px solid #6a6a6a;border-bottom:1px solid #dcdcdc"></div><div class="a" style="left:659px;top:256px;width:1px;height:25px;background:#111"></div><div class="a" style="left:1124px;top:256px;width:1px;height:25px;background:#111"></div><div class="t" style="left:1124.00px;top:264.33px;font-size:12.40px;width:87px;text-align:right;">7.00</div><div class="a" style="left:578px;top:281px;width:636px;height:25px;background:#fff;border-left:1px solid #3a3a3a;border-right:1px solid #6a6a6a;border-bottom:1px solid #dcdcdc"></div><div class="a" style="left:659px;top:281px;width:1px;height:25px;background:#111"></div><div class="a" style="left:1124px;top:281px;width:1px;height:25px;background:#111"></div><div class="t" style="left:1124.00px;top:289.33px;font-size:12.40px;width:87px;text-align:right;">0.10</div><div class="a" style="left:578px;top:306px;width:636px;height:25px;background:#fff;border-left:1px solid #3a3a3a;border-right:1px solid #6a6a6a;border-bottom:1px solid #dcdcdc"></div><div class="a" style="left:659px;top:306px;width:1px;height:25px;background:#111"></div><div class="a" style="left:1124px;top:306px;width:1px;height:25px;background:#111"></div><div class="t" style="left:1124.00px;top:314.33px;font-size:12.40px;width:87px;text-align:right;">2.49</div><div class="a" style="left:578px;top:331px;width:636px;height:25px;background:#fff;border-left:1px solid #3a3a3a;border-right:1px solid #6a6a6a;border-bottom:1px solid #dcdcdc"></div><div class="a" style="left:659px;top:331px;width:1px;height:25px;background:#111"></div><div class="a" style="left:1124px;top:331px;width:1px;height:25px;background:#111"></div><div class="t" style="left:1124.00px;top:339.33px;font-size:12.40px;width:87px;text-align:right;">3.00</div><div class="a" style="left:578px;top:356px;width:636px;height:25px;background:#fff;border-left:1px solid #3a3a3a;border-right:1px solid #6a6a6a;border-bottom:1px solid #dcdcdc"></div><div class="a" style="left:659px;top:356px;width:1px;height:25px;background:#111"></div><div class="a" style="left:1124px;top:356px;width:1px;height:25px;background:#111"></div><div class="t" style="left:1124.00px;top:364.33px;font-size:12.40px;width:87px;text-align:right;">1.00</div><div class="a" style="left:578px;top:381px;width:636px;height:25px;background:#fff;border-left:1px solid #3a3a3a;border-right:1px solid #6a6a6a;border-bottom:1px solid #dcdcdc"></div><div class="a" style="left:659px;top:381px;width:1px;height:25px;background:#111"></div><div class="a" style="left:1124px;top:381px;width:1px;height:25px;background:#111"></div><div class="t" style="left:1124.00px;top:389.33px;font-size:12.40px;width:87px;text-align:right;">1.99</div><div class="a" style="left:578px;top:406px;width:636px;height:25px;background:#fff;border-left:1px solid #3a3a3a;border-right:1px solid #6a6a6a;border-bottom:1px solid #dcdcdc"></div><div class="a" style="left:659px;top:406px;width:1px;height:25px;background:#111"></div><div class="a" style="left:1124px;top:406px;width:1px;height:25px;background:#111"></div><div class="t" style="left:1124.00px;top:414.33px;font-size:12.40px;width:87px;text-align:right;">2.00</div><div class="a" style="left:578px;top:431px;width:636px;height:25px;background:#fff;border-left:1px solid #3a3a3a;border-right:1px solid #6a6a6a;border-bottom:1px solid #dcdcdc"></div><div class="a" style="left:659px;top:431px;width:1px;height:25px;background:#111"></div><div class="a" style="left:1124px;top:431px;width:1px;height:25px;background:#111"></div><div class="t" style="left:1124.00px;top:439.33px;font-size:12.40px;width:87px;text-align:right;">0.00</div><div class="a" style="left:578px;top:456px;width:636px;height:25px;background:#fff;border-left:1px solid #3a3a3a;border-right:1px solid #6a6a6a;border-bottom:1px solid #dcdcdc"></div><div class="a" style="left:659px;top:456px;width:1px;height:25px;background:#111"></div><div class="a" style="left:1124px;top:456px;width:1px;height:25px;background:#111"></div><div class="t" style="left:1124.00px;top:464.33px;font-size:12.40px;width:87px;text-align:right;">4.00</div><div class="a" style="left:578px;top:481px;width:636px;height:25px;background:linear-gradient(to bottom,#b8c8c6,#c0d0cc);border-left:1px solid #3a3a3a;border-right:1px solid #6a6a6a;border-top:1px solid #111;border-bottom:1px solid #111"></div><div class="t" style="left:1124.00px;top:489.33px;font-size:12.40px;width:87px;text-align:right;">9.58</div><div class="a" style="left:1218px;top:481px;width:77px;height:25px;background:#fff5dc;border:1px solid #111"></div><div class="t" style="left:1218.00px;top:488.63px;font-size:12.40px;width:73px;text-align:right;">441.58</div><div class="a" style="left:578px;top:506px;width:636px;height:25px;background:linear-gradient(to bottom,#efe0bc,#f5e8c8);border-left:1px solid #3a3a3a;border-right:1px solid #6a6a6a;border-bottom:1px solid #111"></div><div class="a" style="left:659px;top:506px;width:1px;height:25px;background:#111"></div><div class="a" style="left:1124px;top:506px;width:1px;height:25px;background:#111"></div><div class="a" style="left:578px;top:531px;width:636px;height:25px;background:#fff;border-left:1px solid #3a3a3a;border-right:1px solid #6a6a6a;border-bottom:1px solid #dcdcdc"></div><div class="a" style="left:659px;top:531px;width:1px;height:25px;background:#111"></div><div class="a" style="left:1124px;top:531px;width:1px;height:25px;background:#111"></div><div class="t" style="left:1124.00px;top:539.33px;font-size:12.40px;width:87px;text-align:right;">2.00</div><div class="a" style="left:578px;top:556px;width:636px;height:25px;background:#fff;border-left:1px solid #3a3a3a;border-right:1px solid #6a6a6a;border-bottom:1px solid #dcdcdc"></div><div class="a" style="left:659px;top:556px;width:1px;height:25px;background:#111"></div><div class="a" style="left:1124px;top:556px;width:1px;height:25px;background:#111"></div><div class="t" style="left:1124.00px;top:564.33px;font-size:12.40px;width:87px;text-align:right;">3.97</div><div class="a" style="left:578px;top:581px;width:636px;height:25px;background:#fff;border-left:1px solid #3a3a3a;border-right:1px solid #6a6a6a;border-bottom:1px solid #dcdcdc"></div><div class="a" style="left:659px;top:581px;width:1px;height:25px;background:#111"></div><div class="a" style="left:1124px;top:581px;width:1px;height:25px;background:#111"></div><div class="t" style="left:1124.00px;top:589.33px;font-size:12.40px;width:87px;text-align:right;">5.42</div><div class="a" style="left:578px;top:606px;width:636px;height:25px;background:#fff;border-left:1px solid #3a3a3a;border-right:1px solid #6a6a6a;border-bottom:1px solid #dcdcdc"></div><div class="a" style="left:659px;top:606px;width:1px;height:25px;background:#111"></div><div class="a" style="left:1124px;top:606px;width:1px;height:25px;background:#111"></div><div class="t" style="left:1124.00px;top:614.33px;font-size:12.40px;width:87px;text-align:right;">6.00</div><div class="a" style="left:578px;top:631px;width:636px;height:25px;background:linear-gradient(to bottom,#b8c8c6,#c0d0cc);border-left:1px solid #3a3a3a;border-right:1px solid #6a6a6a;border-top:1px solid #111;border-bottom:1px solid #111"></div><div class="t" style="left:1124.00px;top:639.33px;font-size:12.40px;width:87px;text-align:right;">9.39</div><div class="a" style="left:1218px;top:631px;width:77px;height:25px;background:#fff5dc;border:1px solid #111"></div><div class="t" style="left:1218.00px;top:638.63px;font-size:12.40px;width:73px;text-align:right;">812.97</div><div class="a" style="left:578px;top:656px;width:636px;height:25px;background:linear-gradient(to bottom,#efe0bc,#f5e8c8);border-left:1px solid #3a3a3a;border-right:1px solid #6a6a6a;border-bottom:1px solid #111"></div><div class="a" style="left:659px;top:656px;width:1px;height:25px;background:#111"></div><div class="a" style="left:1124px;top:656px;width:1px;height:25px;background:#111"></div><div class="a" style="left:578px;top:681px;width:636px;height:25px;background:#fff;border-left:1px solid #3a3a3a;border-right:1px solid #6a6a6a;border-bottom:1px solid #dcdcdc"></div><div class="a" style="left:659px;top:681px;width:1px;height:25px;background:#111"></div><div class="a" style="left:1124px;top:681px;width:1px;height:25px;background:#111"></div><div class="t" style="left:1124.00px;top:689.33px;font-size:12.40px;width:87px;text-align:right;">1.48</div><div class="a" style="left:578px;top:706px;width:636px;height:25px;background:#fff;border-left:1px solid #3a3a3a;border-right:1px solid #6a6a6a;border-bottom:1px solid #dcdcdc"></div><div class="a" style="left:659px;top:706px;width:1px;height:25px;background:#111"></div><div class="a" style="left:1124px;top:706px;width:1px;height:25px;background:#111"></div><div class="t" style="left:1124.00px;top:714.33px;font-size:12.40px;width:87px;text-align:right;">0.81</div><div class="a" style="left:578px;top:731px;width:636px;height:25px;background:#fff;border-left:1px solid #3a3a3a;border-right:1px solid #6a6a6a;border-bottom:1px solid #dcdcdc"></div><div class="a" style="left:659px;top:731px;width:1px;height:25px;background:#111"></div><div class="a" style="left:1124px;top:731px;width:1px;height:25px;background:#111"></div><div class="t" style="left:1124.00px;top:739.33px;font-size:12.40px;width:87px;text-align:right;">0.81</div><div class="a" style="left:578px;top:756px;width:636px;height:25px;background:#fff;border-left:1px solid #3a3a3a;border-right:1px solid #6a6a6a;border-bottom:1px solid #dcdcdc"></div><div class="a" style="left:659px;top:756px;width:1px;height:25px;background:#111"></div><div class="a" style="left:1124px;top:756px;width:1px;height:25px;background:#111"></div><div class="t" style="left:1124.00px;top:764.33px;font-size:12.40px;width:87px;text-align:right;">2.56</div><div class="a" style="left:578px;top:781px;width:636px;height:25px;background:linear-gradient(to bottom,#b8c8c6,#c0d0cc);border-left:1px solid #3a3a3a;border-right:1px solid #6a6a6a;border-top:1px solid #111;border-bottom:1px solid #111"></div><div class="t" style="left:1124.00px;top:789.33px;font-size:12.40px;width:87px;text-align:right;">7.66</div><div class="a" style="left:1218px;top:781px;width:77px;height:25px;background:#fff5dc;border:1px solid #111"></div><div class="t" style="left:1218.00px;top:788.63px;font-size:12.40px;width:73px;text-align:right;">890.63</div><div class="a" style="left:578px;top:806px;width:636px;height:25px;background:linear-gradient(to bottom,#efe0bc,#f5e8c8);border-left:1px solid #3a3a3a;border-right:1px solid #6a6a6a;border-bottom:1px solid #111"></div><div class="a" style="left:659px;top:806px;width:1px;height:25px;background:#111"></div><div class="a" style="left:1124px;top:806px;width:1px;height:25px;background:#111"></div><div class="t" style="left:659.00px;top:813.83px;font-size:12.40px;width:465px;text-align:center;">D.- Otros Beneficios</div><div class="a" style="left:578px;top:831px;width:636px;height:25px;background:#fff;border-left:1px solid #3a3a3a;border-right:1px solid #6a6a6a;border-bottom:1px solid #dcdcdc"></div><div class="a" style="left:659px;top:831px;width:1px;height:25px;background:#111"></div><div class="a" style="left:1124px;top:831px;width:1px;height:25px;background:#111"></div><div class="t" style="left:578.00px;top:839.33px;font-size:12.40px;width:81px;text-align:center;">17</div><div class="t" style="left:662.00px;top:839.33px;font-size:12.40px;">Bono de Alimentación (Ley de Alimentación):</div><div class="t" style="left:1124.00px;top:839.33px;font-size:12.40px;width:86.5px;text-align:right;">246.02</div><div class="a" style="left:546px;top:832px;width:29px;height:22px;background:linear-gradient(to bottom,#f6e0e0,#e8c8c8);border:1px solid #7a98c0"></div><svg class="a" style="left:554px;top:837px;width:14px;height:14px;overflow:visible" viewBox="0 0 14 14"><g transform="scale(1.0)">
<path d="M0.8 4.2 H6 V1 L11.8 6.5 L6 12 V8.8 H0.8Z" fill="#b4e6fa" stroke="#17407a" stroke-width="1.1"/>
</g></svg><div class="a" style="left:578px;top:856px;width:636px;height:25px;background:#fff;border-left:1px solid #3a3a3a;border-right:1px solid #6a6a6a;border-bottom:1px solid #dcdcdc"></div><div class="a" style="left:659px;top:856px;width:1px;height:25px;background:#111"></div><div class="a" style="left:1124px;top:856px;width:1px;height:25px;background:#111"></div><div class="t" style="left:578.00px;top:864.33px;font-size:12.40px;width:81px;text-align:center;">18</div><div class="t" style="left:662.00px;top:864.33px;font-size:12.40px;">Suministro de Refrigerio en Segunda Jornada:</div><div class="t" style="left:1124.00px;top:864.33px;font-size:12.40px;width:86.5px;text-align:right;">0.00</div><div class="a" style="left:546px;top:857px;width:29px;height:22px;background:linear-gradient(to bottom,#f6e0e0,#e8c8c8);border:1px solid #7a98c0"></div><svg class="a" style="left:554px;top:862px;width:14px;height:14px;overflow:visible" viewBox="0 0 14 14"><g transform="scale(1.0)">
<path d="M0.8 4.2 H6 V1 L11.8 6.5 L6 12 V8.8 H0.8Z" fill="#b4e6fa" stroke="#17407a" stroke-width="1.1"/>
</g></svg><div class="a" style="left:578px;top:881px;width:636px;height:25px;background:#fff;border-left:1px solid #3a3a3a;border-right:1px solid #6a6a6a;border-bottom:1px solid #dcdcdc"></div><div class="a" style="left:659px;top:881px;width:1px;height:25px;background:#111"></div><div class="a" style="left:1124px;top:881px;width:1px;height:25px;background:#111"></div><div class="t" style="left:578.00px;top:889.33px;font-size:12.40px;width:81px;text-align:center;">19</div><div class="t" style="left:662.00px;top:889.33px;font-size:12.40px;">Transporte de Trabajadores (Distancia > 1.5 km.):</div><div class="t" style="left:1124.00px;top:889.33px;font-size:12.40px;width:86.5px;text-align:right;">0.00</div><div class="a" style="left:546px;top:882px;width:29px;height:22px;background:linear-gradient(to bottom,#f6e0e0,#e8c8c8);border:1px solid #7a98c0"></div><svg class="a" style="left:554px;top:887px;width:14px;height:14px;overflow:visible" viewBox="0 0 14 14"><g transform="scale(1.0)">
<path d="M0.8 4.2 H6 V1 L11.8 6.5 L6 12 V8.8 H0.8Z" fill="#b4e6fa" stroke="#17407a" stroke-width="1.1"/>
</g></svg><div class="a" style="left:578px;top:906px;width:636px;height:25px;background:#fff;border-left:1px solid #3a3a3a;border-right:1px solid #6a6a6a;border-bottom:1px solid #dcdcdc"></div><div class="a" style="left:659px;top:906px;width:1px;height:25px;background:#111"></div><div class="a" style="left:1124px;top:906px;width:1px;height:25px;background:#111"></div><div class="t" style="left:578.00px;top:914.33px;font-size:12.40px;width:81px;text-align:center;">19</div><div class="t" style="left:662.00px;top:914.33px;font-size:12.40px;">Bono de Transporte Diario:</div><div class="t" style="left:1124.00px;top:914.33px;font-size:12.40px;width:86.5px;text-align:right;">0.00</div><div class="a" style="left:578px;top:931px;width:636px;height:25px;background:#fff;border-left:1px solid #3a3a3a;border-right:1px solid #6a6a6a;border-bottom:1px solid #dcdcdc"></div><div class="a" style="left:659px;top:931px;width:1px;height:25px;background:#111"></div><div class="a" style="left:1124px;top:931px;width:1px;height:25px;background:#111"></div><div class="t" style="left:578.00px;top:939.33px;font-size:12.40px;width:81px;text-align:center;">20</div><div class="t" style="left:662.00px;top:939.33px;font-size:12.40px;">Contribución para Útiles Escolares:</div><div class="t" style="left:1124.00px;top:939.33px;font-size:12.40px;width:86.5px;text-align:right;">35.00</div><div class="a" style="left:546px;top:932px;width:29px;height:22px;background:linear-gradient(to bottom,#f6e0e0,#e8c8c8);border:1px solid #7a98c0"></div><svg class="a" style="left:554px;top:937px;width:14px;height:14px;overflow:visible" viewBox="0 0 14 14"><g transform="scale(1.0)">
<path d="M0.8 4.2 H6 V1 L11.8 6.5 L6 12 V8.8 H0.8Z" fill="#b4e6fa" stroke="#17407a" stroke-width="1.1"/>
</g></svg><div class="a" style="left:578px;top:956px;width:636px;height:25px;background:#fff;border-left:1px solid #3a3a3a;border-right:1px solid #6a6a6a;border-bottom:1px solid #dcdcdc"></div><div class="a" style="left:659px;top:956px;width:1px;height:25px;background:#111"></div><div class="a" style="left:1124px;top:956px;width:1px;height:25px;background:#111"></div><div class="t" style="left:578.00px;top:964.33px;font-size:12.40px;width:81px;text-align:center;">21</div><div class="t" style="left:662.00px;top:964.33px;font-size:12.40px;">Contribución por Nacimiento de Hijos:</div><div class="t" style="left:1124.00px;top:964.33px;font-size:12.40px;width:86.5px;text-align:right;">0.12</div><div class="a" style="left:546px;top:957px;width:29px;height:22px;background:linear-gradient(to bottom,#f6e0e0,#e8c8c8);border:1px solid #7a98c0"></div><svg class="a" style="left:554px;top:962px;width:14px;height:14px;overflow:visible" viewBox="0 0 14 14"><g transform="scale(1.0)">
<path d="M0.8 4.2 H6 V1 L11.8 6.5 L6 12 V8.8 H0.8Z" fill="#b4e6fa" stroke="#17407a" stroke-width="1.1"/>
</g></svg></div><div class="a" style="left:483px;top:227px;width:713px;height:593px;background:#f0f0f0;border:1px solid #3d5474;box-shadow:0 4px 12px 2px rgba(0,0,0,.40);"></div><div class="a" style="left:484px;top:228px;width:711px;height:25px;background:#fff"></div><svg class="a" style="left:492px;top:232px;width:13px;height:14px;overflow:visible" viewBox="0 0 13 14"><g transform="scale(0.45)">
<path d="M0.5 28 L2.5 24.5 Q5 22.5 9 22 H18 Q22 22.5 24.5 24.5 L27 28Z" fill="#3a8ee0"/>
<path d="M8 22.5v5.5M19 22.5v5.5" stroke="#a8d0f8" stroke-width="1.2"/>
<path d="M5.5 11 H21 V20 Q21 24.5 16 24.5 H10.5 Q5.5 24.5 5.5 20Z" fill="#f8d2a0" stroke="#6a3a10" stroke-width="0.9"/>
<path d="M5.5 10.5 H21.5 V13.8 H19 L18 12.8 H6.8 V15.5 H5.5Z" fill="#151515"/>
<path d="M8.5 15.2h3M14.5 15.2h3" stroke="#222" stroke-width="1.1"/>
<path d="M11 21 Q14 22.2 17 20.5" stroke="#8a4a20" stroke-width="0.9" fill="none"/>
<path d="M3 11.5 L4.5 5 L8.5 1 H17.5 L21.5 5 L23 11.5Z" fill="#f6d820" stroke="#7a5800" stroke-width="0.9" stroke-linejoin="round"/>
<path d="M11 2.5 L10.5 10M15 2.5 L15.5 10" stroke="#e89a10" stroke-width="1"/>
</g></svg><svg class="a" style="left:487px;top:234px;width:15px;height:15px;overflow:visible" viewBox="0 0 15 15"><g transform="scale(0.5)">
<path d="M0.5 28 L2.5 24.5 Q5 22.5 9 22 H18 Q22 22.5 24.5 24.5 L27 28Z" fill="#3a8ee0"/>
<path d="M8 22.5v5.5M19 22.5v5.5" stroke="#a8d0f8" stroke-width="1.2"/>
<path d="M5.5 11 H21 V20 Q21 24.5 16 24.5 H10.5 Q5.5 24.5 5.5 20Z" fill="#f8d2a0" stroke="#6a3a10" stroke-width="0.9"/>
<path d="M5.5 10.5 H21.5 V13.8 H19 L18 12.8 H6.8 V15.5 H5.5Z" fill="#151515"/>
<path d="M8.5 15.2h3M14.5 15.2h3" stroke="#222" stroke-width="1.1"/>
<path d="M11 21 Q14 22.2 17 20.5" stroke="#8a4a20" stroke-width="0.9" fill="none"/>
<path d="M3 11.5 L4.5 5 L8.5 1 H17.5 L21.5 5 L23 11.5Z" fill="#f6d820" stroke="#7a5800" stroke-width="0.9" stroke-linejoin="round"/>
<path d="M11 2.5 L10.5 10M15 2.5 L15.5 10" stroke="#e89a10" stroke-width="1"/>
</g></svg><svg class="a" style="left:496px;top:237px;width:8px;height:10px;overflow:visible" viewBox="0 0 8 10"><g transform="scale(0.45)">
<rect x="0.6" y="0.6" width="16" height="18.5" rx="1" fill="#b8e0f8" stroke="#5a5aa0" stroke-width="1.1"/>
<path d="M1.5 1.5h14" stroke="#fff" stroke-width="1"/>
<rect x="2.5" y="2.5" width="12" height="4.5" fill="#fff8b0" stroke="#b06a10" stroke-width="0.9"/>
<path d="M3.5 10.5h1.6M6.9 10.5h1.6M10.3 10.5h1.6M13.2 10.5h1.2M3.5 14.5h1.6M6.9 14.5h1.6M10.3 14.5h1.6M13.2 14.5h1.2" stroke="#34466a" stroke-width="1.7"/>
</g></svg><div class="t" style="left:508.70px;top:235.42px;font-size:11.86px;">Higiene y Seguridad Industrial</div><svg class="a" style="left:1174px;top:234px;width:12px;height:12px"><path d="M1 1L11 11M11 1L1 11" stroke="#222" stroke-width="1.1"/></svg><div class="a" style="left:484px;top:305px;width:711px;height:514px;border-top:1px solid #5d7fa8;border-left:1px solid #5d7fa8;"></div><div class="a" style="left:486px;top:267px;width:112px;height:39px;background:linear-gradient(to bottom,#dbe6f8,#b8cbee 50%,#8fafe6);border:1px solid #5d7fa8;border-bottom:none;border-radius:4px 4px 0 0;"></div><div class="t" style="left:496.00px;top:280.95px;font-size:12.95px;">Agua Potable</div><div class="a" style="left:766px;top:267px;width:191px;height:39px;background:linear-gradient(to bottom,#eaf0e2,#d4e0c4 50%,#bccf9e);border:1px solid #5d7fa8;border-bottom:none;border-radius:4px 4px 0 0;"></div><div class="t" style="left:774.00px;top:280.90px;font-size:13.26px;">Primeros Auxilios y Baños</div><div class="a" style="left:956px;top:267px;width:90px;height:39px;background:linear-gradient(to bottom,#f8e2e2,#f4c6c6 50%,#f0a2a2);border:1px solid #5d7fa8;border-bottom:none;border-radius:4px 4px 0 0;"></div><div class="t" style="left:966.00px;top:280.90px;font-size:13.25px;">Vigilantes</div><div class="a" style="left:1045px;top:267px;width:112px;height:39px;background:linear-gradient(to bottom,#ece6f6,#d8ccf0 50%,#bba8e0);border:1px solid #5d7fa8;border-bottom:none;border-radius:4px 4px 0 0;"></div><div class="t" style="left:1055.00px;top:280.95px;font-size:12.91px;">Campamento</div><div class="a" style="left:597px;top:265px;width:170px;height:41px;background:linear-gradient(to bottom,#fff6da,#ffe9b0 50%,#fdd689);border:1px solid #5d7fa8;border-bottom:none;border-radius:4px 4px 0 0;"></div><div class="t" style="left:606.40px;top:277.90px;font-size:13.24px;font-weight:bold;">Equipos de Seguridad</div><div class="a" style="left:598px;top:304px;width:168px;height:3px;background:#fdd689"></div><div class="a" style="left:496px;top:311px;width:685px;height:275px;border:1px solid #6d8fb6;"></div><div class="a" style="left:497px;top:312px;width:683px;height:22px;background:linear-gradient(to bottom,#ebe6f4,#e2dcee 50%,#d8d0e4);border-bottom:1px solid #6d8fb6;"></div><div class="t" style="left:506.30px;top:316.63px;font-size:12.45px;">(49) Equipos de Seguridad</div><div class="t" style="left:680.50px;top:355.61px;font-size:12.56px;">%Personal</div><div class="t" style="left:748.50px;top:355.63px;font-size:12.43px;">Unidad/Trab</div><div class="t" style="left:831.50px;top:355.61px;font-size:12.55px;">Costo/Unidad</div><div class="t" style="left:400.00px;top:381.34px;font-size:12.40px;width:275.5px;text-align:right;">Lentes de Seguridad:</div><div class="a" style="left:680px;top:373px;width:61px;height:27px;background:#fff;border:1px solid #a8a8a8"></div><div class="t" style="left:684.00px;top:381.33px;font-size:12.40px;">50</div><div class="a" style="left:754px;top:373px;width:59px;height:27px;background:#fff;border:1px solid #a8a8a8"></div><div class="t" style="left:758.00px;top:381.33px;font-size:12.40px;">1</div><div class="a" style="left:820px;top:373px;width:99px;height:27px;background:#fff3da;border:1px solid #7f9dc0"></div><div class="t" style="left:824.00px;top:381.33px;font-size:12.40px;">7.50</div><div class="t" style="left:400.00px;top:415.32px;font-size:12.47px;width:275.5px;text-align:right;">Suministro de Mascarillas:</div><div class="a" style="left:680px;top:407px;width:61px;height:27px;background:#fff;border:1px solid #a8a8a8"></div><div class="t" style="left:684.00px;top:415.33px;font-size:12.40px;">30</div><div class="a" style="left:754px;top:407px;width:59px;height:27px;background:#fff;border:1px solid #a8a8a8"></div><div class="t" style="left:758.00px;top:415.33px;font-size:12.40px;">1</div><div class="a" style="left:820px;top:407px;width:99px;height:27px;background:#fff3da;border:1px solid #7f9dc0"></div><div class="t" style="left:824.00px;top:415.33px;font-size:12.40px;">3.40</div><div class="t" style="left:400.00px;top:449.32px;font-size:12.51px;width:275.5px;text-align:right;">Cascos de Seguridad:</div><div class="a" style="left:680px;top:441px;width:61px;height:27px;background:#e2e9ea;border:1px solid #7f9dc0"></div><div class="t" style="left:680.00px;top:449.37px;font-size:12.21px;width:61px;text-align:center;">100%</div><div class="a" style="left:754px;top:441px;width:59px;height:27px;background:#fff;border:1px solid #a8a8a8"></div><div class="t" style="left:758.00px;top:449.33px;font-size:12.40px;">1</div><div class="a" style="left:820px;top:441px;width:99px;height:27px;background:#fff3da;border:1px solid #7f9dc0"></div><div class="t" style="left:824.00px;top:449.33px;font-size:12.40px;">14.00</div><div class="t" style="left:400.00px;top:483.37px;font-size:12.20px;width:275.5px;text-align:right;">Guantes de Carnaza:</div><div class="a" style="left:680px;top:475px;width:61px;height:27px;background:#e2e9ea;border:1px solid #7f9dc0"></div><div class="t" style="left:680.00px;top:483.37px;font-size:12.21px;width:61px;text-align:center;">100%</div><div class="a" style="left:754px;top:475px;width:59px;height:27px;background:#fff;border:1px solid #a8a8a8"></div><div class="t" style="left:758.00px;top:483.33px;font-size:12.40px;">1</div><div class="a" style="left:820px;top:475px;width:99px;height:27px;background:#fff3da;border:1px solid #7f9dc0"></div><div class="t" style="left:824.00px;top:483.33px;font-size:12.40px;">9.00</div><div class="t" style="left:400.00px;top:517.31px;font-size:12.55px;width:275.5px;text-align:right;">Implementos de Seguridad:</div><div class="a" style="left:680px;top:509px;width:61px;height:27px;background:#fff;border:1px solid #a8a8a8"></div><div class="t" style="left:684.00px;top:517.33px;font-size:12.40px;">10</div><div class="a" style="left:754px;top:509px;width:59px;height:27px;background:#fff;border:1px solid #a8a8a8"></div><div class="t" style="left:758.00px;top:517.33px;font-size:12.40px;">1</div><div class="a" style="left:820px;top:509px;width:99px;height:27px;background:#fff3da;border:1px solid #7f9dc0"></div><div class="t" style="left:824.00px;top:517.33px;font-size:12.40px;">118.00</div><div class="a" style="left:948px;top:349px;width:219px;height:223px;background:#b4c8ee;border:1px solid #6d8fb6;"></div><div class="a" style="left:952px;top:355px;width:211px;height:211px;background:#fff;border:1px solid #6d8fb6;"></div><svg class="a" style="left:953px;top:356px;width:209px;height:209px" viewBox="0 0 209 209">
<defs>
<radialGradient id="hg" cx="0.42" cy="0.32" r="0.7">
<stop offset="0" stop-color="#f2ea3a"/><stop offset="0.45" stop-color="#e2d820"/><stop offset="0.8" stop-color="#c8bc18"/><stop offset="1" stop-color="#a89c10"/></radialGradient>
<linearGradient id="rd" x1="0" y1="0" x2="1" y2="0"><stop offset="0" stop-color="#b8ac14" stop-opacity="0"/><stop offset="0.6" stop-color="#a09410" stop-opacity=".9"/><stop offset="1" stop-color="#b8b018" stop-opacity=".6"/></linearGradient>
<radialGradient id="sh" cx="0.5" cy="0.5" r="0.5"><stop offset="0" stop-color="#9a9a9a" stop-opacity=".55"/><stop offset="1" stop-color="#ffffff" stop-opacity="0"/></radialGradient>
<filter id="bl" x="-20%" y="-20%" width="140%" height="140%"><feGaussianBlur stdDeviation="1.2"/></filter>
<clipPath id="hc"><path d="M92.1 6.9 C85.2 7.5 80.0 9.6 73.9 12.6 C67.8 15.6 61.1 18.4 55.6 25.1 C50.1 31.8 44.5 43.5 40.7 52.6 C36.9 61.8 35.2 71.6 32.7 80.0 C30.2 88.4 26.5 96.1 25.9 102.9 C25.3 109.8 26.6 115.0 29.3 121.1 C32.0 127.2 36.4 133.3 41.9 139.4 C47.4 145.5 55.2 152.0 62.4 157.7 C69.6 163.4 76.5 168.9 85.3 173.7 C94.1 178.5 107.0 183.6 115.0 186.3 C123.0 189.0 126.1 189.9 133.3 189.7 C140.5 189.5 151.2 187.8 158.4 185.1 C165.6 182.4 172.5 178.3 176.7 173.7 C180.9 169.1 182.8 163.4 183.6 157.7 C184.4 152.0 183.6 147.0 181.3 139.4 C179.0 131.8 173.0 118.1 169.9 112.0 C166.8 105.9 164.7 108.2 163.0 102.9 C161.3 97.6 162.3 89.5 159.6 80.0 C156.9 70.5 151.4 55.2 147.0 45.7 C142.6 36.2 138.6 29.0 133.3 22.9 C128.0 16.8 121.9 11.8 115.0 9.1 C108.1 6.4 98.9 6.3 92.1 6.9 Z"/></clipPath>
<filter id="bl2" x="-50%" y="-50%" width="200%" height="200%"><feGaussianBlur stdDeviation="6"/></filter>
</defs>
<ellipse cx="112" cy="180" rx="80" ry="14" fill="#999" opacity=".25" filter="url(#bl2)"/>
<path d="M92.1 6.9 C85.2 7.5 80.0 9.6 73.9 12.6 C67.8 15.6 61.1 18.4 55.6 25.1 C50.1 31.8 44.5 43.5 40.7 52.6 C36.9 61.8 35.2 71.6 32.7 80.0 C30.2 88.4 26.5 96.1 25.9 102.9 C25.3 109.8 26.6 115.0 29.3 121.1 C32.0 127.2 36.4 133.3 41.9 139.4 C47.4 145.5 55.2 152.0 62.4 157.7 C69.6 163.4 76.5 168.9 85.3 173.7 C94.1 178.5 107.0 183.6 115.0 186.3 C123.0 189.0 126.1 189.9 133.3 189.7 C140.5 189.5 151.2 187.8 158.4 185.1 C165.6 182.4 172.5 178.3 176.7 173.7 C180.9 169.1 182.8 163.4 183.6 157.7 C184.4 152.0 183.6 147.0 181.3 139.4 C179.0 131.8 173.0 118.1 169.9 112.0 C166.8 105.9 164.7 108.2 163.0 102.9 C161.3 97.6 162.3 89.5 159.6 80.0 C156.9 70.5 151.4 55.2 147.0 45.7 C142.6 36.2 138.6 29.0 133.3 22.9 C128.0 16.8 121.9 11.8 115.0 9.1 C108.1 6.4 98.9 6.3 92.1 6.9 Z" fill="#d8d020"/>
<g clip-path="url(#hc)"><path d="M28.0 112.0 C4.0 108.3 31.3 123.7 36.0 130.0 C40.7 136.3 47.7 143.7 56.0 150.0 C64.3 156.3 75.7 163.0 86.0 168.0 C96.3 173.0 107.3 178.0 118.0 180.0 C128.7 182.0 141.0 182.0 150.0 180.0 C159.0 178.0 167.0 172.7 172.0 168.0 C177.0 163.3 204.0 161.3 180.0 152.0 C156.0 142.7 52.0 115.7 28.0 112.0 Z" fill="none" stroke="#ece860" stroke-width="7" opacity=".55" filter="url(#bl)"/></g>
<path d="M92.1 6.9 C85.2 7.5 80.0 9.6 73.9 12.6 C67.8 15.6 61.1 18.4 55.6 25.1 C50.1 31.8 44.5 43.5 40.7 52.6 C36.9 61.8 35.0 71.4 32.7 80.0 C30.4 88.6 25.8 96.5 27.0 104.0 C28.2 111.5 34.2 118.7 40.0 125.0 C45.8 131.3 53.7 137.0 62.0 142.0 C70.3 147.0 80.3 152.0 90.0 155.0 C99.7 158.0 110.0 160.5 120.0 160.0 C130.0 159.5 142.3 157.8 150.0 152.0 C157.7 146.2 164.0 133.7 166.0 125.0 C168.0 116.3 163.1 107.5 162.0 100.0 C160.9 92.5 162.1 89.0 159.6 80.0 C157.1 71.0 151.4 55.2 147.0 45.7 C142.6 36.2 138.6 29.0 133.3 22.9 C128.0 16.8 121.9 11.8 115.0 9.1 C108.1 6.4 98.9 6.3 92.1 6.9 Z" fill="url(#hg)"/>
<path d="M128.0 30.0 C130.8 25.9 141.7 37.4 147.0 45.7 C152.3 54.0 156.9 70.5 159.6 80.0 C162.3 89.5 161.9 95.4 163.0 102.9 C164.1 110.4 168.2 117.2 166.0 125.0 C163.8 132.8 156.0 145.8 150.0 150.0 C144.0 154.2 133.0 156.7 130.0 150.0 C127.0 143.3 132.0 123.3 132.0 110.0 C132.0 96.7 130.7 83.3 130.0 70.0 C129.3 56.7 125.2 34.0 128.0 30.0 Z" fill="url(#rd)" filter="url(#bl)"/>
<path d="M96 10 C108 40 114 80 118 140" stroke="#f0e850" stroke-width="4" fill="none" opacity=".6" filter="url(#bl)"/>
<path d="M104 10 C118 40 124 80 128 140" stroke="#c8bc18" stroke-width="3" fill="none" opacity=".5" filter="url(#bl)"/>
<path d="M70.0 50.0 C73.3 45.3 81.8 43.7 86.0 44.0 C90.2 44.3 94.0 47.7 95.0 52.0 C96.0 56.3 93.8 64.3 92.0 70.0 C90.2 75.7 87.0 83.7 84.0 86.0 C81.0 88.3 77.0 86.3 74.0 84.0 C71.0 81.7 66.7 77.7 66.0 72.0 C65.3 66.3 66.7 54.7 70.0 50.0 Z" fill="#fffbd8" opacity=".92" filter="url(#bl)"/>
<path d="M70 139 L92 146 L93 162 L71 155Z" fill="#cdc420" stroke="#a89c10" stroke-width="1"/>
<path d="M72 140 L90 146 L90 150 L72 144Z" fill="#fffbd0" opacity=".9"/>
<g clip-path="url(#hc)"><path d="M164 108 L170 110 L172 142 L166 144Z" fill="#f4f0a0" opacity=".6" filter="url(#bl)"/></g>
<g clip-path="url(#hc)"><path d="M32 108 C36 118 44 130 52 136" stroke="#f8f4a0" stroke-width="3" fill="none" opacity=".5" filter="url(#bl)"/></g>
</svg><div class="a" style="left:496px;top:585px;width:307px;height:151px;border:1px solid #6d8fb6;"></div><div class="a" style="left:497px;top:586px;width:305px;height:23px;background:linear-gradient(to bottom,#e0e8e6,#d4dedb 50%,#c6d4d0);border-bottom:1px solid #6d8fb6;"></div><div class="t" style="left:506.00px;top:590.82px;font-size:12.48px;">(60) Dotación de Impermeables</div><div class="t" style="left:400.00px;top:658.78px;font-size:12.76px;width:215.7px;text-align:right;">Impermeables:</div><div class="a" style="left:620px;top:651px;width:95px;height:27px;background:#fff3da;border:1px solid #7f9dc0"></div><div class="t" style="left:624.00px;top:658.84px;font-size:12.38px;">15.00</div><div class="t" style="left:720.80px;top:657.84px;font-size:12.37px;">x Unidad</div><div class="a" style="left:802px;top:585px;width:379px;height:151px;border:1px solid #6d8fb6;"></div><div class="a" style="left:803px;top:586px;width:377px;height:23px;background:linear-gradient(to bottom,#faeadf,#f4dccd 50%,#ecd0bd);border-bottom:1px solid #6d8fb6;"></div><div class="t" style="left:812.00px;top:590.83px;font-size:12.40px;">(58) Suministro de Botas y Trajes de Trabajo</div><div class="t" style="left:700.00px;top:633.37px;font-size:12.83px;width:241.5px;text-align:right;">Camisa:</div><div class="a" style="left:946px;top:626px;width:97px;height:26px;background:#fff3da;border:1px solid #7f9dc0"></div><div class="t" style="left:950.00px;top:632.94px;font-size:12.38px;">15.00</div><div class="t" style="left:1050.80px;top:633.44px;font-size:12.37px;">x Unidad</div><div class="t" style="left:700.00px;top:665.44px;font-size:12.34px;width:241.5px;text-align:right;">Pantalón:</div><div class="a" style="left:946px;top:658px;width:97px;height:26px;background:#fff3da;border:1px solid #7f9dc0"></div><div class="t" style="left:950.00px;top:664.93px;font-size:12.40px;">24.00</div><div class="t" style="left:1050.80px;top:665.44px;font-size:12.37px;">x Unidad</div><div class="t" style="left:700.00px;top:697.43px;font-size:12.40px;width:241.5px;text-align:right;">Botas Seguridad:</div><div class="a" style="left:946px;top:690px;width:97px;height:26px;background:#fff3da;border:1px solid #7f9dc0"></div><div class="t" style="left:950.00px;top:696.93px;font-size:12.40px;">36.00</div><div class="t" style="left:1050.80px;top:697.44px;font-size:12.37px;">x Unidad</div><div class="btn" style="left:665px;top:752px;width:123px;height:43px;background:linear-gradient(to bottom,#eef0e6,#e6eadc 50%,#dfe4d2);"></div><svg class="a" style="left:674px;top:757px;width:35px;height:30px;overflow:visible" viewBox="0 0 35 30"><g transform="scale(0.96)">
<path d="M18 6 L5 18 M18 6 L31 18" stroke="#16223a" stroke-width="3.4" stroke-linecap="round"/>
<path d="M10 2.5 Q18 7 26 9 M10 9 Q18 7 26 2.5" stroke="#16223a" stroke-width="2.6" fill="none" stroke-linecap="round"/>
<path d="M1.5 22.5 Q1.5 15.5 8.5 15.5 H27.5 Q34.5 15.5 34.5 22.5 Q34.5 29.5 27.5 29.5 Q23.5 29.5 21.5 26.5 Q18 23.5 14.5 26.5 Q12.5 29.5 8.5 29.5 Q1.5 29.5 1.5 22.5Z" fill="#d4e4f8" stroke="#16223a" stroke-width="2.2"/>
<path d="M3 20 Q4 17 8.5 17 H27.5 Q32 17 33 20 Z" fill="#7f98b8"/>
</g></svg><svg class="a" style="left:686px;top:758px;width:15px;height:18px;overflow:visible" viewBox="0 0 15 18"><g transform="scale(0.85)">
<rect x="0.6" y="0.6" width="16" height="18.5" rx="1" fill="#b8e0f8" stroke="#5a5aa0" stroke-width="1.1"/>
<path d="M1.5 1.5h14" stroke="#fff" stroke-width="1"/>
<rect x="2.5" y="2.5" width="12" height="4.5" fill="#fff8b0" stroke="#b06a10" stroke-width="0.9"/>
<path d="M3.5 10.5h1.6M6.9 10.5h1.6M10.3 10.5h1.6M13.2 10.5h1.2M3.5 14.5h1.6M6.9 14.5h1.6M10.3 14.5h1.6M13.2 14.5h1.2" stroke="#34466a" stroke-width="1.7"/>
</g></svg><div class="t" style="left:715.00px;top:768.91px;font-size:11.95px;">Actualizar</div><div class="btn" style="left:789px;top:752px;width:125px;height:43px;background:linear-gradient(to bottom,#f8e6e6,#f4dede 50%,#f0d8d8);"></div><svg class="a" style="left:807px;top:756px;width:30px;height:31px;overflow:visible" viewBox="0 0 30 31"><g transform="scale(1.05)">
<path d="M0.5 28 L2.5 24.5 Q5 22.5 9 22 H18 Q22 22.5 24.5 24.5 L27 28Z" fill="#3a8ee0"/>
<path d="M8 22.5v5.5M19 22.5v5.5" stroke="#a8d0f8" stroke-width="1.2"/>
<path d="M5.5 11 H21 V20 Q21 24.5 16 24.5 H10.5 Q5.5 24.5 5.5 20Z" fill="#f8d2a0" stroke="#6a3a10" stroke-width="0.9"/>
<path d="M5.5 10.5 H21.5 V13.8 H19 L18 12.8 H6.8 V15.5 H5.5Z" fill="#151515"/>
<path d="M8.5 15.2h3M14.5 15.2h3" stroke="#222" stroke-width="1.1"/>
<path d="M11 21 Q14 22.2 17 20.5" stroke="#8a4a20" stroke-width="0.9" fill="none"/>
<path d="M3 11.5 L4.5 5 L8.5 1 H17.5 L21.5 5 L23 11.5Z" fill="#f6d820" stroke="#7a5800" stroke-width="0.9" stroke-linejoin="round"/>
<path d="M11 2.5 L10.5 10M15 2.5 L15.5 10" stroke="#e89a10" stroke-width="1"/>
</g></svg><svg class="a" style="left:796px;top:765px;width:25px;height:26px;overflow:visible" viewBox="0 0 25 26"><g transform="scale(1.0)">
<path d="M9 11 L22 23" stroke="#5a2a08" stroke-width="4.2" stroke-linecap="round"/>
<path d="M9 11 L22 23" stroke="#a8642a" stroke-width="2.4" stroke-linecap="round"/>
<g transform="rotate(-42 8 9)"><rect x="1" y="5" width="14" height="8" rx="1" fill="#b86e30" stroke="#5a2a08" stroke-width="1"/><path d="M4.5 5v8M11.5 5v8" stroke="#7a4010" stroke-width="1"/></g>
</g></svg><div class="t" style="left:841.00px;top:768.25px;font-size:12.93px;">Cláusulas</div><div class="btn" style="left:915px;top:752px;width:105px;height:43px;background:linear-gradient(to bottom,#fbfbfd,#f4f4f8 50%,#eceef4);"></div><svg class="a" style="left:925px;top:758px;width:30px;height:30px;overflow:visible" viewBox="0 0 30 30"><g transform="scale(1.0)">
<path d="M11 2.5 H27 V26 H11Z" fill="#d6cdbd" stroke="#2a2a2a" stroke-width="0.9"/>
<path d="M11 2.5 H16 V26 H11Z" fill="#b8b0a0"/>
<path d="M19.5 4.5 L27.5 1 V28 L19.5 25.5 Z" fill="#a4561e" stroke="#241006" stroke-width="1.1"/>
<circle cx="21.5" cy="14.5" r="1.1" fill="#f4f0e0" stroke="#222" stroke-width="0.5"/>
<path d="M0.8 9 H7.5 V4.5 L15 12.8 L7.5 21 V16.5 H0.8Z" fill="#90aed0" stroke="#456a90" stroke-width="0.9"/>
</g></svg><div class="t" style="left:959.00px;top:768.33px;font-size:12.41px;">Retorno</div></body></html>
